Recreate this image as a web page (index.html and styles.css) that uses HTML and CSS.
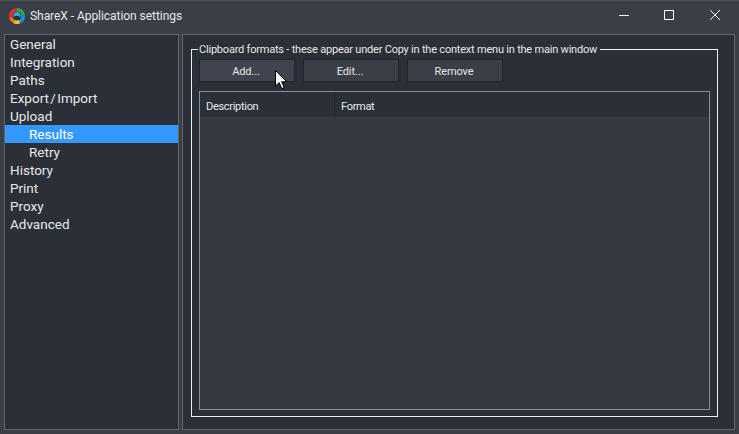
FILE: index.html
```html
<!DOCTYPE html>
<html lang="en">
<head>
<meta charset="utf-8">
<title>ShareX - Application settings</title>
<link rel="stylesheet" href="styles.css">
</head>
<body>
<div class="window">
  <header class="titlebar">
    <svg class="logo" viewBox="0 0 16 16" width="16" height="16" aria-hidden="true">
      <g fill="none" stroke-width="3.600">
        <path d="M1.900 9.500A6.200 6.200 0 0 1 8 1.800" stroke="#e62e2e"/>
        <path d="M8 1.800A6.200 6.200 0 0 1 14.200 7.500" stroke="#2fa84a"/>
        <path d="M14.200 7.500A6.200 6.200 0 0 1 10.500 13.700" stroke="#1e8fe8"/>
        <path d="M10.500 13.700A6.200 6.200 0 0 1 5 13.400" stroke="#f2c21c"/>
        <path d="M5 13.400A6.200 6.200 0 0 1 1.900 9.500" stroke="#f0701c"/>
      </g>
      <circle cx="8" cy="8" r="4" fill="#22323f"/>
      <path d="M4.600 9A3.600 3.600 0 0 1 11 5.800 5 5 0 0 1 11.400 9.500 4.500 4.500 0 0 0 4.600 9Z" fill="#2fa8e8"/>
    </svg>
    <span class="title">ShareX - Application settings</span>
    <div class="controls">
      <svg class="ctl" viewBox="0 0 46 30" width="46" height="30" aria-hidden="true"><path d="M19 14.500h10" stroke="#fff" fill="none"/></svg>
      <svg class="ctl" viewBox="0 0 46 30" width="46" height="30" aria-hidden="true"><rect x="18.500" y="9.500" width="9" height="9" stroke="#fff" fill="none"/></svg>
      <svg class="ctl" viewBox="0 0 46 30" width="46" height="30" aria-hidden="true"><path d="M18 9l10 10M28 9l-10 10" stroke="#fff" fill="none"/></svg>
    </div>
  </header>
  <main class="content">
    <nav class="nav">
      <div class="nav-item">General</div>
      <div class="nav-item">Integration</div>
      <div class="nav-item">Paths</div>
      <div class="nav-item">Export / Import</div>
      <div class="nav-item">Upload</div>
      <div class="nav-item sub selected">Results</div>
      <div class="nav-item sub">Retry</div>
      <div class="nav-item">History</div>
      <div class="nav-item">Print</div>
      <div class="nav-item">Proxy</div>
      <div class="nav-item">Advanced</div>
    </nav>
    <section class="panel">
      <fieldset class="group">
        <legend class="legend">Clipboard formats - these appear under Copy in the context menu in the main window</legend>
        <div class="buttons">
          <button class="btn hover">Add...</button>
          <button class="btn">Edit...</button>
          <button class="btn">Remove</button>
        </div>
        <div class="table">
          <div class="thead">
            <div class="th col1">Description</div>
            <div class="th">Format</div>
          </div>
        </div>
      </fieldset>
    </section>
  </main>
  <svg class="cursor" viewBox="0 0 13 20" width="13" height="20" aria-hidden="true">
    <path d="M.5.500v15.500l3.700-3.400 2.500 6 2.500-1-2.500-5.800h5z" fill="#fff" stroke="#000"/>
  </svg>
</div>
</body>
</html>
```
FILE: styles.css
```css
* { box-sizing: border-box; }
html, body { margin: 0; padding: 0; }
body {
  width: 739px;
  height: 434px;
  overflow: hidden;
  font-family: Roboto, "Liberation Sans", sans-serif;
  color: #e8e8e8;
  background: #3a3e47;
}
.window {
  position: relative;
  width: 739px;
  height: 434px;
  display: flex;
  flex-direction: column;
  background: #3a3e47;
  border-top: 1px solid #4a4e57;
}
.titlebar {
  height: 30px;
  display: flex;
  align-items: center;
  padding-left: 9px;
  flex: none;
}
.logo { flex: none; margin-top: -1px; }
.title {
  margin-left: 5px;
  font-size: 12px;
  letter-spacing: -0.050px;
  color: #e8e8e8;
}
.controls {
  margin-left: auto;
  display: flex;
  padding-right: 1px;
}
.ctl { display: block; }
.content {
  flex: 1;
  display: flex;
  gap: 3px;
  padding: 3px 4px 4px 4px;
  min-height: 0;
}
.nav {
  width: 175px;
  flex: none;
  border: 1px solid #666;
  background: #2b2f38;
}
.nav-item {
  height: 18px;
  line-height: 18px;
  padding-left: 5px;
  font-size: 13.500px;
  word-spacing: -2px;
  white-space: nowrap;
}
.nav-item.sub { padding-left: 24px; }
.nav-item.selected { background: #3399ff; color: #fff; }
.panel {
  flex: 1;
  min-width: 0;
  border: 1px solid #666;
  background: #2b2f38;
  padding: 7px 16px 12px 8px;
  display: flex;
}
.group {
  flex: 1;
  min-width: 0;
  margin: 0;
  border: 1px solid #f0f0f0;
  padding: 2px 7px 6px 7px;
  display: flex;
  flex-direction: column;
}
.legend {
  padding: 0 3px 0 1px;
  margin-left: -1px;
  font-size: 11px;
  line-height: 15px;
  letter-spacing: -0.210px;
  color: #e8e8e8;
}
.buttons {
  display: flex;
  gap: 8px;
}
.btn {
  width: 96px;
  height: 23px;
  padding: 1px 2px 0 0;
  border: 1px solid #22252c;
  background: #3a3e47;
  color: #e8e8e8;
  font: 11px Roboto, "Liberation Sans", sans-serif;
  letter-spacing: -0.120px;
}
.btn.hover { background: #3f444e; }
.table {
  margin-top: 9px;
  flex: 1;
  border: 1px solid #8a8d92;
  background: #353941;
}
.thead {
  height: 25px;
  display: flex;
  background: #2b2f38;
}
.th {
  font-size: 11px;
  line-height: 29px;
  padding-left: 6px;
  letter-spacing: -0.300px;
}
.col1 {
  width: 135px;
  border-right: 1px solid #22252c;
}
.cursor {
  position: absolute;
  left: 275px;
  top: 69px;
}
```
